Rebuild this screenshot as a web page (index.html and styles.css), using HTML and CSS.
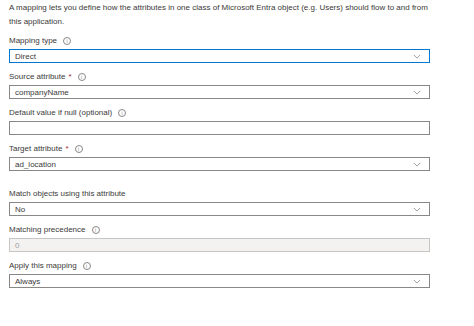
FILE: index.html
```html
<!DOCTYPE html>
<html lang="en">
<head>
<meta charset="utf-8">
<title>Attribute mapping</title>
<link rel="stylesheet" href="styles.css">
</head>
<body>
<div class="panel">
  <p class="desc">A mapping lets you define how the attributes in one class of Microsoft Entra object (e.g. Users) should flow to and from this application.</p>

  <div class="field">
    <div class="label">Mapping type <span class="info">i</span></div>
    <div class="box select focused"><span class="value">Direct</span><svg class="chev" viewBox="0 0 10 6"><path d="M1 1 L5 5 L9 1"/></svg></div>
  </div>

  <div class="field">
    <div class="label">Source attribute <span class="req">*</span> <span class="info">i</span></div>
    <div class="box select"><span class="value">companyName</span><svg class="chev" viewBox="0 0 10 6"><path d="M1 1 L5 5 L9 1"/></svg></div>
  </div>

  <div class="field">
    <div class="label">Default value if null (optional) <span class="info">i</span></div>
    <div class="box"></div>
  </div>

  <div class="field">
    <div class="label">Target attribute <span class="req">*</span> <span class="info">i</span></div>
    <div class="box select"><span class="value">ad_location</span><svg class="chev" viewBox="0 0 10 6"><path d="M1 1 L5 5 L9 1"/></svg></div>
  </div>

  <div class="field field-spaced">
    <div class="label">Match objects using this attribute</div>
    <div class="box select"><span class="value">No</span><svg class="chev" viewBox="0 0 10 6"><path d="M1 1 L5 5 L9 1"/></svg></div>
  </div>

  <div class="field">
    <div class="label">Matching precedence <span class="info">i</span></div>
    <div class="box disabled"><span class="value">0</span></div>
  </div>

  <div class="field">
    <div class="label">Apply this mapping <span class="info">i</span></div>
    <div class="box select"><span class="value">Always</span><svg class="chev" viewBox="0 0 10 6"><path d="M1 1 L5 5 L9 1"/></svg></div>
  </div>
</div>
</body>
</html>
```

FILE: styles.css
```css
html, body {
  margin: 0;
  padding: 0;
  background: #ffffff;
}

body {
  font-family: "Liberation Sans", Arial, sans-serif;
  font-size: 8px;
  color: #3b3a39;
}

.panel {
  display: flex;
  flex-direction: column;
  gap: 8px;
  padding: 1px 0 0 9px;
  width: 421px;
}

.desc {
  margin: 0 -4px -2px 0;
  line-height: 14px;
}

.field {
  display: flex;
  flex-direction: column;
}

.field-spaced {
  margin-top: 9px;
}

.label {
  display: flex;
  align-items: center;
  gap: 3px;
  height: 12px;
  line-height: 12px;
  margin-bottom: 2px;
}

.req {
  color: #a4262c;
}

.info {
  display: inline-flex;
  align-items: center;
  justify-content: center;
  box-sizing: border-box;
  width: 8px;
  height: 8px;
  border: 0.7px solid #8a8886;
  border-radius: 50%;
  font-size: 5px;
  line-height: 1;
  color: #8a8886;
  margin-left: 3px;
}

.box {
  box-sizing: border-box;
  height: 14px;
  border: 1px solid #8a8886;
  background: #ffffff;
  display: flex;
  align-items: center;
  padding: 0 8px 0 5px;
}

.box.focused {
  border-color: #0078d4;
}

.box.disabled {
  background: #f3f2f1;
  border-color: #c8c6c4;
  color: #a19f9d;
}

.value {
  flex: 1;
}

.chev {
  width: 8px;
  height: 5px;
  fill: none;
  stroke: #8a8886;
  stroke-width: 1;
}
```
